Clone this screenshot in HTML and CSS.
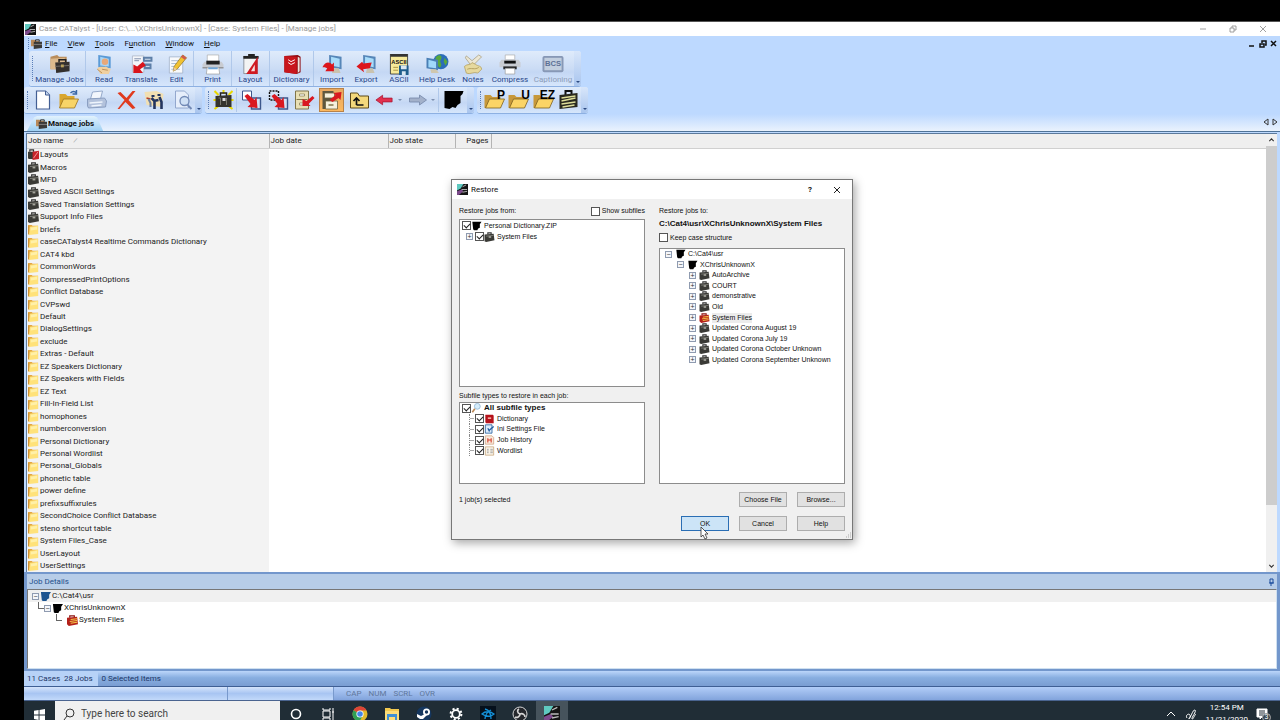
FILE: index.html
```html
<!DOCTYPE html>
<html lang="en">
<head>
    <meta charset="UTF-8">
    <meta name="viewport" content="width=device-width, initial-scale=1.0">
    <title>Case CATalyst</title>
    <link rel="stylesheet" href="styles.css">
</head>
<body>

    <!-- Icon sprite -->
    <svg class="sprite" aria-hidden="true">
        <symbol id="i-app" viewBox="0 0 12 12">
            <rect width="12" height="12" fill="#151515"/>
            <path d="M0 0h7L4 5 0 7z" fill="#5fc9c0"/>
            <path d="M0 8l5-2 2 2-5 4H0z" fill="#7d4a8c"/>
            <path d="M6 3l4-2M5 6h6M6 9l5-1" stroke="#bbb" stroke-width="1"/>
        </symbol>
        <symbol id="i-case" viewBox="0 0 12 12">
            <path d="M4 3V1h4v2" fill="none" stroke="#333" stroke-width="1.3"/>
            <path d="M0 3l11-1 1 8-10 2-2-1z" fill="#3a3a36"/>
            <path d="M2 5l9-1" stroke="#80807a" stroke-width="1"/>
            <rect x="5" y="5" width="3" height="2" fill="#a5a59c"/>
        </symbol>
        <symbol id="i-case-red" viewBox="0 0 12 12">
            <path d="M2 3V1h4v2" fill="none" stroke="#333" stroke-width="1.3"/>
            <path d="M0 3h7v8H1L0 10z" fill="#3a3a36"/>
            <path d="M5 3l7-1v9l-7 1z" fill="#c8242a"/>
            <path d="M6 10l5-7" stroke="#f3a0a0"/>
        </symbol>
        <symbol id="i-case-open" viewBox="0 0 12 12">
            <path d="M3 3V1h5v2" fill="none" stroke="#8c1410" stroke-width="1.3"/>
            <path d="M0 3l11-1 1 8-10 2-2-2z" fill="#b3201a"/>
            <path d="M4 5l7-1M3 7l8-1M4 9l7-1" stroke="#f5c545" stroke-width="1.1"/>
        </symbol>
        <symbol id="i-folder" viewBox="0 0 12 12">
            <path d="M0 1h4l1 1h6v9H0z" fill="#e2a640"/>
            <path d="M2 3l9-1v9L1 12z" fill="#ffe27a"/>
            <path d="M3 4l7-1v3L3 7z" fill="#fff0a8"/>
            <path d="M.6 2v9.500" stroke="#cc8c34"/>
        </symbol>
        <symbol id="i-map" viewBox="0 0 12 12">
            <path d="M1 1h11l-2 3 0 4-2 1-1 2H3L2 10z"/>
        </symbol>
        <symbol id="i-tabcase" viewBox="0 0 12 12">
            <path d="M0 2h4l1 1h4v6H0z" fill="#b98a5a"/>
            <path d="M5 4V2h4v2" fill="none" stroke="#222" stroke-width="1"/>
            <path d="M3 4h9v7l-9 1z" fill="#3b3a38"/>
            <path d="M3 7h9" stroke="#999" stroke-width=".8"/>
        </symbol>
        <symbol id="i-manage" viewBox="0 0 24 22">
            <path d="M2 3l7-2 2 2h8v13H2z" fill="#b98d5c"/>
            <path d="M2 5l15-1v12H2z" fill="#dcb98c"/>
            <path d="M11 9V6h7v3" fill="none" stroke="#222" stroke-width="1.6"/>
            <path d="M7 9l15-1v10l-14 2z" fill="#34302e"/>
            <path d="M7 13l15-1" stroke="#77706a"/>
            <rect x="13" y="11" width="3" height="3" fill="#b9a15c"/>
        </symbol>
        <symbol id="i-read" viewBox="0 0 24 22">
            <path d="M6 1l13 2v12L6 14z" fill="#5a9ad6"/>
            <path d="M8 3l9 2v8l-9-1z" fill="#a9d5f5"/>
            <circle cx="13" cy="8" r="3.4" fill="#e8a878"/>
            <path d="M5 15c3-3 6-1 9-2l5 3-2 5H8z" fill="#f0d0a0"/>
            <path d="M5 16l5 4M10 16l6 1" stroke="#bb8d55"/>
        </symbol>
        <symbol id="i-translate" viewBox="0 0 24 22">
            <path d="M3 2h12v17H3z" fill="#f4f6fa" stroke="#a9b3c4" stroke-width=".8"/>
            <path d="M14 3h10v5H14zM15 10h8v6h-8z" fill="#5d7fa8"/>
            <path d="M16 5.500h6M17 13h4" stroke="#dce6f2"/>
            <path d="M5 5h7M5 7h5" stroke="#7d8da8"/>
            <path d="M4 11l4 2 6-5 3 4-6 4 3 4-10 0z" fill="#d8141c"/>
        </symbol>
        <symbol id="i-edit" viewBox="0 0 24 22">
            <path d="M4 3h14v17H4z" fill="#f8f9fb" stroke="#9fb0c8" stroke-width=".8"/>
            <path d="M6 7h8M6 10h7M6 13h5M6 16h9" stroke="#a9b9d0"/>
            <path d="M18 1l4 3-10 12-4 2 1-5z" fill="#f1c232" stroke="#8a6a1a" stroke-width=".7"/>
            <path d="M8 18l1-4 3 2z" fill="#e9c9a0"/>
            <path d="M18 1l4 3-2 2-4-3z" fill="#cf5a50"/>
        </symbol>
        <symbol id="i-print" viewBox="0 0 24 22">
            <path d="M6 1h12v7H6z" fill="#fff" stroke="#aaa" stroke-width=".7"/>
            <path d="M3 8h18l2 3v4H1v-4z" fill="#c9ccd2"/>
            <path d="M5 7h14v4H5z" fill="#222"/>
            <path d="M1 14h22v1H1z" fill="#777"/>
            <path d="M6 14h12l1 7H5z" fill="#fff" stroke="#999" stroke-width=".7"/>
            <path d="M7 14h10v2H7z" fill="#6fa5d8"/>
        </symbol>
        <symbol id="i-layout" viewBox="0 0 24 22">
            <path d="M4 2h15v19H4z" fill="#8f949c"/>
            <path d="M5 3h13v17H5z" fill="#f3f3f3"/>
            <path d="M4 2h16v3H4zM9 0h7v3H9z" fill="#222"/>
            <path d="M19 3v18H7z" fill="#cf1a22"/>
            <path d="M16 11v7h-4z" fill="#f5dede"/>
        </symbol>
        <symbol id="i-dict" viewBox="0 0 24 22">
            <path d="M4 2l14-1 3 2v16l-4 2-13-2z" fill="#8e0b10"/>
            <path d="M4 2l13 1v18L4 19z" fill="#c8161c"/>
            <path d="M18 3l2 1v14l-2 2z" fill="#eee4dc"/>
            <path d="M8 6l3 2 4-2M8 9l3 2 4-2" fill="none" stroke="#fff" stroke-width="1"/>
        </symbol>
        <symbol id="i-import" viewBox="0 0 24 22">
            <path d="M9 1l13 2v13L9 14z" fill="#5686b8"/>
            <path d="M11 3l9 2v9l-9-2z" fill="#a8dcfa"/>
            <path d="M13 15h6l2 5h-9z" fill="#c9c2ae"/>
            <path d="M2 14c3-6 7-6 10-3l2-2 0 9-9 0 2-3c-2-1-3-1-5-1z" fill="#dc161c"/>
        </symbol>
        <symbol id="i-export" viewBox="0 0 24 22">
            <path d="M9 1l13 2v13L9 14z" fill="#5686b8"/>
            <path d="M11 3l9 2v9l-9-2z" fill="#a8dcfa"/>
            <path d="M13 15h6l2 5h-9z" fill="#c9c2ae"/>
            <path d="M2 13l6-5 1 2 9-1-2 6-7 1 1 3z" fill="#dc161c"/>
        </symbol>
        <symbol id="i-ascii" viewBox="0 0 24 22">
            <path d="M3 0h18v21H3z" fill="#f6ea9a" stroke="#222" stroke-width=".8"/>
            <path d="M3 0h18v3H3z" fill="#333"/>
            <path d="M6 14h5M6 17h5" stroke="#aa9440"/>
            <path d="M12 12h10v10H12z" fill="#1f5e8c"/>
            <path d="M14 12h6v4h-6zM15 18h4v4h-4z" fill="#d9e8f2"/>
        </symbol>
        <symbol id="i-help" viewBox="0 0 24 22">
            <circle cx="16" cy="8" r="8" fill="#2c6db8"/>
            <path d="M12 2c4-2 6 1 4 4s2 4 0 7-3-1-4-4-3-4 0-7zM20 4l3 4-2 4-2-4z" fill="#58a83c"/>
            <path d="M1 4l12 2v11L1 15z" fill="#4a7fb5"/>
            <path d="M3 6l8 2v7l-8-1z" fill="#a0d8fa"/>
            <path d="M5 16h6l3 4H6z" fill="#cfc7ae"/>
        </symbol>
        <symbol id="i-notes" viewBox="0 0 24 22">
            <path d="M5 2l6 5 7-6 3 2-8 8-3 1-6-8z" fill="#ece7d4" stroke="#a89f80" stroke-width=".8"/>
            <path d="M3 13c3-3 7-1 8-4l4 2c2 2 6 1 6 5l-4 4c-4-2-8 2-12 0z" fill="#e6d99e" stroke="#b39f5e" stroke-width=".8"/>
            <path d="M6 16c4-2 8 1 12-2" fill="none" stroke="#b39f5e"/>
        </symbol>
        <symbol id="i-compress" viewBox="0 0 24 22">
            <path d="M7 1h10v5H7z" fill="#fff" stroke="#aaa" stroke-width=".7"/>
            <path d="M3 6h18l2 3v5H1V9z" fill="#c9ccd2"/>
            <path d="M6 7h12v3H6z" fill="#111"/>
            <path d="M5 13h14v3H5z" fill="#222"/>
            <path d="M7 15h10v6H7z" fill="#fff" stroke="#999" stroke-width=".7"/>
        </symbol>
        <symbol id="i-bcs" viewBox="0 0 24 22">
            <rect x="1" y="2" width="22" height="17" rx="2" fill="#8798b6"/>
            <rect x="3" y="4" width="18" height="13" fill="#c2cede"/>
        </symbol>
        <symbol id="i-new" viewBox="0 0 20 20">
            <path d="M4 1h9l4 4v14H4z" fill="#fff" stroke="#445f94" stroke-width="1.2"/>
            <path d="M13 1v4h4" fill="#c6d7ef" stroke="#445f94"/>
        </symbol>
        <symbol id="i-open" viewBox="0 0 20 20">
            <path d="M1 4h6l2 2h7v12H1z" fill="#d9a62e"/>
            <path d="M1 18l4-9h15l-4 9z" fill="#f8d468" stroke="#9c7420" stroke-width=".8"/>
            <path d="M12 3c2-2 4-2 6 0M18 0v4h-4" fill="none" stroke="#3867a8" stroke-width="1.4"/>
        </symbol>
        <symbol id="i-print-off" viewBox="0 0 20 20">
            <path d="M6 2l10-1-2 8H4z" fill="#f2f6fc" stroke="#8298be" stroke-width=".8"/>
            <path d="M1 9l17-1 2 3-1 6-17 1-1-2z" fill="#b3c2dc" stroke="#7e93b8" stroke-width=".8"/>
            <path d="M3 13l13-1M5 16l10-1" stroke="#eef4fc" stroke-width="1.5"/>
        </symbol>
        <symbol id="i-delete" viewBox="0 0 20 20">
            <path d="M1 3l3-1 6 6 6-7 3 0-7 9 7 8-3 1-7-7-6 7H1l7-9z" fill="#e03a1e"/>
        </symbol>
        <symbol id="i-word" viewBox="0 0 20 20">
            <path d="M0 2l12-1 7 3-2 13-15-2z" fill="#f1dfb2"/>
            <path d="M7 8l3 3v8M15 7l2 5v7M9 11l5-1" fill="none" stroke="#23355f" stroke-width="2.6"/>
            <path d="M7 6h3M13 5h3" stroke="#23355f" stroke-width="2"/>
            <path d="M2 8l4 1" stroke="#b6402a" stroke-width="1.5"/>
            <path d="M4 9l2 4v4" fill="none" stroke="#6d7f9f" stroke-width="2"/>
        </symbol>
        <symbol id="i-find" viewBox="0 0 20 20">
            <path d="M3 1h9l4 4v13H3z" fill="#e6eefb" stroke="#8ba0c8" stroke-width=".9"/>
            <circle cx="12" cy="11" r="4.5" fill="#cfe0f5" stroke="#7289b5" stroke-width="1.3"/>
            <path d="M15 15l4 4" stroke="#7289b5" stroke-width="2"/>
        </symbol>
        <symbol id="i-newcase" viewBox="0 0 20 20">
            <path d="M1 1l4 4M10 0v4M19 1l-4 4M0 10h3M20 10h-3M1 19l4-3M19 19l-4-3" stroke="#e8d800" stroke-width="2"/>
            <path d="M7 6V3h6v3" fill="none" stroke="#222" stroke-width="1.5"/>
            <path d="M2 6l16-1v12H2z" fill="#34342e"/>
            <path d="M5 8h2v7M13 8v7" fill="none" stroke="#77776c"/>
            <path d="M9 8h3v3H9z" fill="#ddd"/>
        </symbol>
        <symbol id="i-copy" viewBox="0 0 20 20">
            <path d="M1 1h9v9H1z" fill="#fff" stroke="#3d578c"/>
            <path d="M10 8h9v11h-9z" fill="#d4e0f4" stroke="#3d578c" stroke-width="1.4"/>
            <path d="M3 6l3-2 7 6 2-3 1 11-10-1 3-3z" fill="#d91820"/>
        </symbol>
        <symbol id="i-move" viewBox="0 0 20 20">
            <path d="M1 1h9v9H1z" fill="none" stroke="#111" stroke-width="1.4" stroke-dasharray="2 1"/>
            <path d="M10 8h9v11h-9z" fill="#d4e0f4" stroke="#3d578c" stroke-width="1.4"/>
            <path d="M3 6l3-2 7 6 2-3 1 11-10-1 3-3z" fill="#d91820"/>
        </symbol>
        <symbol id="i-backup" viewBox="0 0 20 20">
            <path d="M1 1h13v18H1z" fill="#e8dfb4" stroke="#80754a"/>
            <path d="M2 9h11v1H2z" fill="#80754a"/>
            <path d="M5 4h5v2H5zM5 13h5v2H5z" fill="#fff" stroke="#80754a" stroke-width=".7"/>
            <path d="M8 9l4 2 6-5 2 2-6 6 2 2-8 0z" fill="#d91820"/>
        </symbol>
        <symbol id="i-restore" viewBox="0 0 20 20">
            <path d="M1 1h11v18H1z" fill="#5d563f"/>
            <path d="M3 3h10v5H3zM4 11h12v8H4z" fill="#f5f0dd" stroke="#6c6240" stroke-width=".8"/>
            <path d="M7 14h5v2H7z" fill="#9d936f"/>
            <path d="M8 10l6-5-2-2 8-1-1 8-2-2-6 4z" fill="#d91820"/>
        </symbol>
        <symbol id="i-up" viewBox="0 0 20 20">
            <path d="M1 3h7l2 3h9v12H1z" fill="#f3d87c" stroke="#5d4a1a"/>
            <path d="M7 15V9M4 11l3-3 3 3M7 15h7" fill="none" stroke="#111" stroke-width="1.7"/>
        </symbol>
        <symbol id="i-back" viewBox="0 0 20 20">
            <path d="M1 10l7-5v3h10v4H8v3z" fill="#e2304e" stroke="#a81632" stroke-width=".8"/>
        </symbol>
        <symbol id="i-forward" viewBox="0 0 20 20">
            <path d="M19 10l-7-5v3H2v4h10v3z" fill="#a3b1ca" stroke="#7486a8" stroke-width=".8"/>
        </symbol>
        <symbol id="i-ohio" viewBox="0 0 20 20">
            <path d="M1 1h19l-1 3-2 2v7l-3 2-2 3-3-1-3 2-5-1z"/>
        </symbol>
        <symbol id="i-fold" viewBox="0 0 20 20">
            <path d="M0 5h6l2 2h8v11H0z" fill="#c7983a"/>
            <path d="M1 18l4-9h15l-4 9z" fill="#fbd466" stroke="#7c6020" stroke-width=".8"/>
        </symbol>
        <symbol id="i-casez" viewBox="0 0 20 20">
            <path d="M7 5V1h6v4" fill="none" stroke="#111" stroke-width="2"/>
            <path d="M1 5l18-2v14L1 19z" fill="#29291f"/>
            <path d="M3 8l14-2M3 11l14-3M3 14l14-2M4 17l12-2" fill="none" stroke="#dede9a" stroke-width="1.5"/>
        </symbol>
        <symbol id="i-book" viewBox="0 0 12 12">
            <path d="M1 1h9l1 1v9H2l-1-1z" fill="#b5121a"/>
            <path d="M4 4h4v2H4z" fill="#f2a8a0"/>
        </symbol>
        <symbol id="i-all" viewBox="0 0 12 12">
            <circle cx="7" cy="4" r="3.5" fill="#d5ecfa" stroke="#90b6d4"/>
            <path d="M4 7l-3 4" stroke="#b98450" stroke-width="2"/>
        </symbol>
        <symbol id="i-ini" viewBox="0 0 12 12">
            <path d="M1 1h8v10H1z" fill="#dcebfa" stroke="#28609c"/>
            <path d="M5 8l6-5M4 5l2 4" stroke="#1f5aa0" stroke-width="1.5"/>
        </symbol>
        <symbol id="i-history" viewBox="0 0 12 12">
            <path d="M1 1h8l2 2v8H1z" fill="#fbe9dc" stroke="#c99c74" stroke-width=".8"/>
            <path d="M4 4v5M8 4v5M4 6h4" stroke="#d2402c" stroke-width="1.3"/>
        </symbol>
        <symbol id="i-wordlist" viewBox="0 0 12 12">
            <path d="M1 1h10v10H1z" fill="#faf4e8" stroke="#c09868" stroke-width=".8"/>
            <path d="M3 4h2M7 4h3M3 6h2M7 6h3M3 8h2M7 8h3" stroke="#9b9b9b"/>
        </symbol>
        <symbol id="i-chrome" viewBox="0 0 16 16">
            <circle cx="8" cy="8" r="7.5" fill="#e2b92c"/>
            <path d="M8 8L1.500 4.200A7.500 7.500 0 0 1 14.600 4.500H8z" fill="#dc4437"/>
            <path d="M8 8L1.500 4.200A7.500 7.500 0 0 0 7.500 15.500L11 9z" fill="#2f9e55"/>
            <circle cx="8" cy="8" r="3.6" fill="#fff"/>
            <circle cx="8" cy="8" r="2.8" fill="#4486e8"/>
        </symbol>
        <symbol id="i-explorer" viewBox="0 0 16 16">
            <path d="M1 2h5l1 1h8v11H1z" fill="#f3c94f"/>
            <path d="M1 5h14v9H1z" fill="#fcdc78"/>
            <path d="M3 8h10v6h-2v-3H5v3H3z" fill="#3f8fd4"/>
        </symbol>
        <symbol id="i-steam" viewBox="0 0 16 16">
            <circle cx="8" cy="8" r="7.5" fill="#15365e"/>
            <circle cx="10.5" cy="6" r="2.6" fill="none" stroke="#fff" stroke-width="1.8"/>
            <path d="M1 8l4 2 4-2 2 1-4 4-3 0-3-2z" fill="#fff"/>
        </symbol>
        <symbol id="i-gear" viewBox="0 0 16 16">
            <circle cx="8" cy="8" r="5.4" fill="none" stroke="#fff" stroke-width="2" stroke-dasharray="2.1 2.140"/>
            <circle cx="8" cy="8" r="3.8" fill="none" stroke="#fff" stroke-width="1.8"/>
        </symbol>
        <symbol id="i-bnet" viewBox="0 0 16 16">
            <rect width="16" height="16" fill="#05101c"/>
            <path d="M2 8c3-3 8-3 12 0-3 3-8 3-12 0zM5 3c4 1 6 5 6 10M11 4c-4 2-6 5-6 9" fill="none" stroke="#1490d8" stroke-width="1.3"/>
        </symbol>
        <symbol id="i-obs" viewBox="0 0 16 16">
            <circle cx="8" cy="8" r="7" fill="#25272c" stroke="#d6d6d6"/>
            <path d="M8 8c-3-1-3-4-1-5M8 8c3-1 5 1 5 3M8 8c0 3-3 4-5 3" fill="none" stroke="#d6d6d6" stroke-width="1.7"/>
        </symbol>
    </svg>

    <div class="desktop">
        <main class="app">
            <header class="titlebar">
                <svg class="icon"><use href="#i-app"/></svg>
                <span class="title">Case CATalyst - [User: C:\...\XChrisUnknownX] - [Case: System Files] - [Manage jobs]</span>
                <div class="window-buttons">
                    <button aria-label="Minimize"><svg viewBox="0 0 8 8"><path d="M1 4h6"/></svg></button>
                    <button aria-label="Restore down"><svg viewBox="0 0 8 8"><path d="M1 3h4v4H1zM3 3V1h4v4H5"/></svg></button>
                    <button aria-label="Close"><svg viewBox="0 0 8 8"><path d="M1 1l6 6M7 1L1 7"/></svg></button>
                </div>
            </header>

            <nav class="menubar">
                <span class="grip"></span>
                <svg class="icon"><use href="#i-tabcase"/></svg>
                <button><u>F</u>ile</button>
                <button><u>V</u>iew</button>
                <button><u>T</u>ools</button>
                <button>F<u>u</u>nction</button>
                <button><u>W</u>indow</button>
                <button><u>H</u>elp</button>
                <div class="child-buttons">
                    <button aria-label="Minimize job window"><svg viewBox="0 0 8 8"><path d="M1 6h5"/></svg></button>
                    <button aria-label="Restore job window"><svg viewBox="0 0 8 8"><path d="M1 4h4v3H1zM3 3V1h4v4H6"/></svg></button>
                    <button aria-label="Close job window"><svg viewBox="0 0 8 8"><path d="M1 1l5 5M6 1L1 6"/></svg></button>
                </div>
            </nav>

            <div class="toolbars">
                <div class="toolbar toolbar-large">
                    <span class="grip"></span>
                    <div class="big-buttons">
                        <button class="divided"><svg><use href="#i-manage"/></svg>Manage Jobs</button>
                        <button><svg><use href="#i-read"/></svg>Read</button>
                        <button><svg><use href="#i-translate"/></svg>Translate</button>
                        <button class="divided"><svg><use href="#i-edit"/></svg>Edit</button>
                        <button class="divided"><svg><use href="#i-print"/></svg>Print</button>
                        <button class="divided"><svg><use href="#i-layout"/></svg>Layout</button>
                        <button class="divided"><svg><use href="#i-dict"/></svg>Dictionary</button>
                        <button><svg><use href="#i-import"/></svg>Import</button>
                        <button><svg><use href="#i-export"/></svg>Export</button>
                        <button><svg viewBox="0 0 24 22"><use href="#i-ascii"/><text x="12" y="10" text-anchor="middle" class="icon-text">ASCII</text></svg>ASCII</button>
                        <button><svg><use href="#i-help"/></svg>Help Desk</button>
                        <button><svg><use href="#i-notes"/></svg>Notes</button>
                        <button><svg><use href="#i-compress"/></svg>Compress</button>
                        <button disabled><svg viewBox="0 0 24 22"><use href="#i-bcs"/><text x="12" y="13" text-anchor="middle" class="icon-text bcs">BCS</text></svg>Captioning</button>
                    </div>
                    <button class="more" aria-label="Toolbar options"></button>
                </div>
                <div class="toolbar-row">
                    <div class="toolbar">
                        <span class="grip"></span>
                        <div class="small-buttons file-buttons">
                            <button aria-label="New"><svg><use href="#i-new"/></svg></button>
                            <button aria-label="Open"><svg><use href="#i-open"/></svg></button>
                            <button aria-label="Print"><svg><use href="#i-print-off"/></svg></button>
                            <button aria-label="Delete"><svg><use href="#i-delete"/></svg></button>
                            <button aria-label="Find job"><svg><use href="#i-word"/></svg></button>
                            <button aria-label="Preview"><svg><use href="#i-find"/></svg></button>
                        </div>
                        <button class="more" aria-label="Toolbar options"></button>
                    </div>
                    <div class="toolbar">
                        <span class="grip"></span>
                        <div class="small-buttons job-buttons">
                            <button class="divided" aria-label="New case"><svg><use href="#i-newcase"/></svg></button>
                            <button aria-label="Copy"><svg><use href="#i-copy"/></svg></button>
                            <button aria-label="Move"><svg><use href="#i-move"/></svg></button>
                            <button aria-label="Back up"><svg><use href="#i-backup"/></svg></button>
                            <button class="pressed" aria-label="Restore"><svg><use href="#i-restore"/></svg></button>
                            <button aria-label="Up one level"><svg><use href="#i-up"/></svg></button>
                            <button aria-label="Back"><svg><use href="#i-back"/></svg></button>
                            <button class="drop" aria-label="Back history"></button>
                            <button aria-label="Forward"><svg><use href="#i-forward"/></svg></button>
                            <button class="drop divided" aria-label="Forward history"></button>
                            <button aria-label="User"><svg><use href="#i-ohio"/></svg></button>
                        </div>
                        <button class="more" aria-label="Toolbar options"></button>
                    </div>
                    <div class="toolbar">
                        <span class="grip"></span>
                        <div class="small-buttons folder-buttons">
                            <button><svg><use href="#i-fold"/></svg><b>P</b></button>
                            <button><svg><use href="#i-fold"/></svg><b>U</b></button>
                            <button><svg><use href="#i-fold"/></svg><b>EZ</b></button>
                            <button aria-label="Case"><svg><use href="#i-casez"/></svg></button>
                        </div>
                        <button class="more" aria-label="Toolbar options"></button>
                    </div>
                </div>
            </div>

            <div class="tabs">
                <button class="tab"><svg class="icon"><use href="#i-tabcase"/></svg>Manage jobs</button>
                <div class="tab-arrows">
                    <button aria-label="Previous tab"><svg viewBox="0 0 6 8"><path d="M5 1v6L1 4z"/></svg></button>
                    <button aria-label="Next tab"><svg viewBox="0 0 6 8"><path d="M1 1v6l4-3z"/></svg></button>
                </div>
            </div>

            <section class="jobs">
                <table class="job-table">
                    <colgroup><col class="c-name"><col class="c-date"><col class="c-state"><col class="c-pages"><col></colgroup>
                    <thead>
                        <tr><th>Job name <i class="sort">⁄</i></th><th>Job date</th><th>Job state</th><th class="right">Pages</th><th></th></tr>
                    </thead>
                    <tbody>
                        <tr><td><svg class="icon"><use href="#i-case-red"/></svg>Layouts</td></tr>
                        <tr><td><svg class="icon"><use href="#i-case"/></svg>Macros</td></tr>
                        <tr><td><svg class="icon"><use href="#i-case"/></svg>MFD</td></tr>
                        <tr><td><svg class="icon"><use href="#i-case"/></svg>Saved ASCII Settings</td></tr>
                        <tr><td><svg class="icon"><use href="#i-case"/></svg>Saved Translation Settings</td></tr>
                        <tr><td><svg class="icon"><use href="#i-case"/></svg>Support Info Files</td></tr>
                        <tr><td><svg class="icon"><use href="#i-folder"/></svg>briefs</td></tr>
                        <tr><td><svg class="icon"><use href="#i-folder"/></svg>caseCATalyst4 Realtime Commands Dictionary</td></tr>
                        <tr><td><svg class="icon"><use href="#i-folder"/></svg>CAT4 kbd</td></tr>
                        <tr><td><svg class="icon"><use href="#i-folder"/></svg>CommonWords</td></tr>
                        <tr><td><svg class="icon"><use href="#i-folder"/></svg>CompressedPrintOptions</td></tr>
                        <tr><td><svg class="icon"><use href="#i-folder"/></svg>Conflict Database</td></tr>
                        <tr><td><svg class="icon"><use href="#i-folder"/></svg>CVPswd</td></tr>
                        <tr><td><svg class="icon"><use href="#i-folder"/></svg>Default</td></tr>
                        <tr><td><svg class="icon"><use href="#i-folder"/></svg>DialogSettings</td></tr>
                        <tr><td><svg class="icon"><use href="#i-folder"/></svg>exclude</td></tr>
                        <tr><td><svg class="icon"><use href="#i-folder"/></svg>Extras - Default</td></tr>
                        <tr><td><svg class="icon"><use href="#i-folder"/></svg>EZ Speakers Dictionary</td></tr>
                        <tr><td><svg class="icon"><use href="#i-folder"/></svg>EZ Speakers with Fields</td></tr>
                        <tr><td><svg class="icon"><use href="#i-folder"/></svg>EZ Text</td></tr>
                        <tr><td><svg class="icon"><use href="#i-folder"/></svg>Fill-In-Field List</td></tr>
                        <tr><td><svg class="icon"><use href="#i-folder"/></svg>homophones</td></tr>
                        <tr><td><svg class="icon"><use href="#i-folder"/></svg>numberconversion</td></tr>
                        <tr><td><svg class="icon"><use href="#i-folder"/></svg>Personal Dictionary</td></tr>
                        <tr><td><svg class="icon"><use href="#i-folder"/></svg>Personal Wordlist</td></tr>
                        <tr><td><svg class="icon"><use href="#i-folder"/></svg>Personal_Globals</td></tr>
                        <tr><td><svg class="icon"><use href="#i-folder"/></svg>phonetic table</td></tr>
                        <tr><td><svg class="icon"><use href="#i-folder"/></svg>power define</td></tr>
                        <tr><td><svg class="icon"><use href="#i-folder"/></svg>prefixsuffixrules</td></tr>
                        <tr><td><svg class="icon"><use href="#i-folder"/></svg>SecondChoice Conflict Database</td></tr>
                        <tr><td><svg class="icon"><use href="#i-folder"/></svg>steno shortcut table</td></tr>
                        <tr><td><svg class="icon"><use href="#i-folder"/></svg>System Files_Case</td></tr>
                        <tr><td><svg class="icon"><use href="#i-folder"/></svg>UserLayout</td></tr>
                        <tr><td><svg class="icon"><use href="#i-folder"/></svg>UserSettings</td></tr>
                    </tbody>
                </table>
                <div class="scrollbar">
                    <svg viewBox="0 0 10 10"><path d="M3 6l2-2 2 2"/></svg>
                    <div class="thumb"></div>
                    <svg viewBox="0 0 10 10"><path d="M3 4l2 2 2-2"/></svg>
                </div>
            </section>

            <section class="details">
                <div class="details-head">
                    <span>Job Details</span>
                    <button aria-label="Pin"><svg viewBox="0 0 8 8"><path d="M3 1h3v4H3zM2 5h5M4 5v3"/></svg></button>
                </div>
                <ul class="details-tree">
                    <li class="current"><button class="twig">−</button><svg class="icon blue"><use href="#i-map"/></svg>C:\Cat4\usr</li>
                    <li class="level-1"><span class="elbow"></span><button class="twig">−</button><svg class="icon"><use href="#i-map"/></svg>XChrisUnknownX</li>
                    <li class="level-2"><span class="elbow"></span><svg class="icon"><use href="#i-case-open"/></svg>System Files</li>
                </ul>
            </section>

            <div class="summary">
                <span class="counts">11 Cases&nbsp; 28 Jobs</span>
                <span>0 Selected Items</span>
            </div>
            <footer class="status">
                <span class="cell wide"></span>
                <span class="cell"></span>
                <div class="keys"><span>CAP</span><span>NUM</span><span>SCRL</span><span>OVR</span></div>
            </footer>
        </main>

        <div class="taskbar">
            <button class="start" aria-label="Start"><svg viewBox="0 0 12 12"><path d="M0 2l5-1v5H0zM6 1l6-1v6H6zM0 7h5v5l-5-1zM6 7h6v5l-6 0z"/></svg></button>
            <label class="search">
                <svg viewBox="0 0 12 12"><circle cx="7" cy="5" r="4"/><path d="M4 8l-3 4"/></svg>
                <input type="text" aria-label="Search" placeholder="Type here to search">
            </label>
            <div class="task-buttons">
                <button aria-label="Cortana"><svg viewBox="0 0 16 16"><circle class="line" cx="8" cy="8" r="4.5"/></svg></button>
                <button aria-label="Task view"><svg viewBox="0 0 16 16"><path class="thin" d="M3 5h7v6H3zM3 2v2h7V2M3 14v-2h7v2M13 2v12M12 6h2"/></svg></button>
                <button aria-label="Chrome"><svg><use href="#i-chrome"/></svg></button>
                <button aria-label="File Explorer"><svg><use href="#i-explorer"/></svg></button>
                <button aria-label="Steam"><svg><use href="#i-steam"/></svg></button>
                <button aria-label="Settings"><svg><use href="#i-gear"/></svg></button>
                <button aria-label="Battle.net"><svg><use href="#i-bnet"/></svg></button>
                <button aria-label="OBS"><svg><use href="#i-obs"/></svg></button>
                <button class="active" aria-label="Case CATalyst"><svg><use href="#i-app"/></svg></button>
            </div>
            <div class="tray">
                <svg viewBox="0 0 12 12"><path d="M2 8l4-4 4 4"/></svg>
                <svg viewBox="0 0 12 12"><path d="M2 10c-2-3 2-5 3-3s-2 4-1 4 4-10 6-9-4 8-3 9 3-5 4-5"/></svg>
                <div class="clock"><span>12:54 PM</span><span>11/21/2020</span></div>
                <div class="notice">
                    <svg viewBox="0 0 12 12"><path d="M1 1h10v8H6l-2 2V9H1z"/><path class="rule" d="M3 3h6M3 5h6M3 7h4"/></svg>
                    <span class="badge">3</span>
                </div>
            </div>
        </div>

        <div class="dialog" role="dialog" aria-label="Restore">
            <div class="dialog-title">
                <svg class="icon"><use href="#i-app"/></svg>
                <span>Restore</span>
                <button aria-label="Help on item">?</button>
                <button aria-label="Close"><svg viewBox="0 0 8 8"><path d="M1 1l6 6M7 1L1 7"/></svg></button>
            </div>
            <div class="dialog-body">
                <div class="column">
                    <div class="row">
                        <span>Restore jobs from:</span>
                        <label><input type="checkbox">Show subfiles</label>
                    </div>
                    <div class="box from-box">
                        <ul class="tree">
                            <li><label><input type="checkbox" checked><svg class="icon"><use href="#i-map"/></svg>Personal Dictionary.ZIP</label></li>
                            <li class="sub"><button class="twig">+</button><label><input type="checkbox" checked><svg class="icon"><use href="#i-case"/></svg>System Files</label></li>
                        </ul>
                    </div>
                    <div class="caption">Subfile types to restore in each job:</div>
                    <div class="box types-box">
                        <ul class="tree">
                            <li class="strong"><label><input type="checkbox" checked><svg class="icon"><use href="#i-all"/></svg>All subfile types</label></li>
                            <li class="sub"><span class="branch"></span><label><input type="checkbox" checked><svg class="icon"><use href="#i-book"/></svg>Dictionary</label></li>
                            <li class="sub"><span class="branch"></span><label><input type="checkbox" checked><svg class="icon"><use href="#i-ini"/></svg>Ini Settings File</label></li>
                            <li class="sub"><span class="branch"></span><label><input type="checkbox" checked><svg class="icon"><use href="#i-history"/></svg>Job History</label></li>
                            <li class="sub"><span class="branch"></span><label><input type="checkbox" checked><svg class="icon"><use href="#i-wordlist"/></svg>Wordlist</label></li>
                        </ul>
                    </div>
                </div>
                <div class="column">
                    <div class="row"><span>Restore jobs to:</span></div>
                    <div class="path">C:\Cat4\usr\XChrisUnknownX\System Files</div>
                    <label class="keep"><input type="checkbox">Keep case structure</label>
                    <div class="box">
                        <ul class="tree target">
                            <li><button class="twig">−</button><svg class="icon"><use href="#i-map"/></svg>C:\Cat4\usr</li>
                            <li class="depth-1"><button class="twig">−</button><svg class="icon"><use href="#i-map"/></svg>XChrisUnknownX</li>
                            <li class="depth-2"><button class="twig">+</button><svg class="icon"><use href="#i-case"/></svg>AutoArchive</li>
                            <li class="depth-2"><button class="twig">+</button><svg class="icon"><use href="#i-case"/></svg>COURT</li>
                            <li class="depth-2"><button class="twig">+</button><svg class="icon"><use href="#i-case"/></svg>demonstrative</li>
                            <li class="depth-2"><button class="twig">+</button><svg class="icon"><use href="#i-case"/></svg>Old</li>
                            <li class="depth-2"><button class="twig">+</button><svg class="icon"><use href="#i-case-open"/></svg><span class="selected">System Files</span></li>
                            <li class="depth-2"><button class="twig">+</button><svg class="icon"><use href="#i-case"/></svg>Updated Corona August 19</li>
                            <li class="depth-2"><button class="twig">+</button><svg class="icon"><use href="#i-case"/></svg>Updated Corona July 19</li>
                            <li class="depth-2"><button class="twig">+</button><svg class="icon"><use href="#i-case"/></svg>Updated Corona October Unknown</li>
                            <li class="depth-2"><button class="twig">+</button><svg class="icon"><use href="#i-case"/></svg>Updated Corona September Unknown</li>
                        </ul>
                    </div>
                </div>
            </div>
            <div class="dialog-foot">
                <span>1 job(s) selected</span>
                <button class="push choose">Choose File</button>
                <button class="push">Browse...</button>
                <button class="push ok">OK</button>
                <button class="push">Cancel</button>
                <button class="push">Help</button>
            </div>
            <svg class="resize" viewBox="0 0 6 6"><path d="M5 1h1M3 3h1M5 3h1M1 5h1M3 5h1M5 5h1"/></svg>
            <svg class="cursor" viewBox="0 0 10 14"><path d="M1 1v10l2-2 2 4 2-1-2-4h3z"/></svg>
        </div>
    </div>

</body>
</html>
```
FILE: styles.css
```css
* {
    margin: 0;
    padding: 0;
    box-sizing: border-box;
}

body {
    background: #000;
    color: #222;
    font-family: Roboto, "Noto Sans", sans-serif;
    font-size: 8px;
    line-height: 12px;
}

button {
    background: none;
    border: none;
    color: inherit;
    font: inherit;
}

ul {
    list-style: none;
}

.sprite {
    position: absolute;
    width: 0;
    height: 0;
}

.icon {
    width: 11px;
    height: 11px;
    flex: none;
}

.icon-text {
    font: bold 6px "Liberation Sans", sans-serif;
    fill: #111;
}

.icon-text.bcs {
    font-size: 8px;
    fill: #5c7096;
}

.desktop {
    position: relative;
    display: flex;
    flex-direction: column;
    height: 100vh;
    padding: 21px 0 0 24px;
    overflow: hidden;
}

.app {
    flex: 1;
    display: flex;
    flex-direction: column;
    min-height: 0;
    background: #bdd9ff;
}

/* Title and menu */
.titlebar {
    display: flex;
    align-items: center;
    height: 15px;
    padding-left: 1px;
    background: #fff;
    color: #999;
    border-top: 1px solid #555;
}

.title {
    flex: 1;
    padding-left: 3px;
}

.window-buttons {
    display: flex;
    gap: 22px;
    padding-right: 13px;
}

.window-buttons button,
.child-buttons button {
    width: 8px;
    height: 8px;
    display: flex;
}

.window-buttons svg,
.child-buttons svg {
    width: 8px;
    height: 8px;
    fill: none;
    stroke: #888;
    stroke-width: .8;
}

.menubar {
    display: flex;
    align-items: center;
    gap: 10px;
    height: 15px;
    padding-left: 4px;
    color: #111;
}

.menubar .icon {
    margin: 0 -7px 0 -9px;
}

.child-buttons {
    display: flex;
    gap: 3px;
    margin-left: auto;
    padding-right: 2px;
}

.child-buttons svg {
    stroke: #111;
    stroke-width: 1.5;
}

.grip {
    flex: none;
    width: 2px;
    height: 70%;
    border-left: 1px dotted #5a7eb8;
}

/* Toolbars */
.toolbars {
    display: flex;
    flex-direction: column;
    align-items: flex-start;
}

.toolbar {
    display: flex;
    align-items: center;
    padding-left: 3px;
    border-radius: 3px;
    background: linear-gradient(#dfebfb, #cbdcf5 50%, #c4d7f4 60%, #d6e6fb);
    border-bottom: 1px solid #8db0e2;
}

.toolbar-large {
    height: 36px;
    margin-left: 5px;
}

.toolbar-row {
    display: flex;
    gap: 3px;
    height: 27px;
}

.big-buttons {
    display: grid;
    grid-template-columns: 52px 36px 38px 34px 38px 38px 44px 36px 32px 34px 42px 30px 44px 42px;
    height: 100%;
}

.big-buttons button {
    display: flex;
    flex-direction: column;
    align-items: center;
    padding-top: 3px;
    color: #28468a;
    line-height: 10px;
    white-space: nowrap;
}

.big-buttons svg {
    width: 24px;
    height: 21px;
}

.big-buttons button:disabled {
    color: #8c9cb8;
}

.divided {
    border-right: 1px solid #b0c8ea;
}

.more {
    align-self: stretch;
    width: 7px;
    display: flex;
    align-items: flex-end;
    justify-content: center;
    padding-bottom: 3px;
    background: linear-gradient(#d8e6fa, #a9c5ee);
    border-radius: 0 3px 3px 0;
}

.more::after,
.drop::after {
    content: "";
    border: 2px solid transparent;
    border-top-color: #2c4a80;
    border-bottom: 0;
}

.drop::after {
    border-top-color: #7c8fb0;
}

.small-buttons {
    display: grid;
    height: 100%;
    align-items: center;
}

.small-buttons button {
    display: flex;
    align-items: center;
    justify-content: center;
    height: 24px;
}

.small-buttons svg {
    width: 21px;
    height: 20px;
}

.file-buttons {
    grid-template-columns: 27px 25px 31px 28px 29px 26px;
}

.job-buttons {
    grid-template-columns: 27px 29px 24px 29px 25px 31px 19px 12px 22px 11px 28px;
}

.folder-buttons {
    grid-template-columns: 24px 25px 25px 25px;
}

.pressed {
    background: linear-gradient(#e8a860, #fbb860);
    border: 1px solid #b98248;
}

.folder-buttons button {
    position: relative;
}

.folder-buttons b {
    position: absolute;
    top: 1px;
    right: 1px;
    color: #000;
    font: bold 12px/12px "Liberation Sans", sans-serif;
}

/* Tab strip */
.tabs {
    display: flex;
    align-items: flex-end;
    justify-content: space-between;
    height: 18px;
    background: linear-gradient(#bdd9ff, #eaf2fd);
    border-bottom: 1px solid #4f7398;
}

.tab {
    display: flex;
    align-items: center;
    gap: 1px;
    height: 15px;
    margin-left: 3px;
    padding: 0 9px;
    color: #111;
    font-weight: bold;
    background: linear-gradient(#e2f2fd, #9fd0f3);
    clip-path: polygon(0 100%, 7px 10%, 10px 0, calc(100% - 9px) 0, calc(100% - 6px) 10%, 100% 100%);
}

.tab-arrows {
    display: flex;
    gap: 3px;
    padding: 0 2px 5px 0;
}

.tab-arrows button {
    display: flex;
}

.tab-arrows svg {
    width: 6px;
    height: 8px;
    fill: none;
    stroke: #333;
}

/* Job list */
.jobs {
    flex: 1;
    display: flex;
    min-height: 0;
    margin: 1px 3px 0 2px;
    background: #fff;
    border-left: 1px solid #5c7a9c;
    border-top: 1px solid #5c7a9c;
}

.job-table {
    flex: 1;
    height: 100%;
    table-layout: fixed;
    border-collapse: collapse;
}

.c-name { width: 242px; }
.c-date { width: 119px; }
.c-state { width: 67px; }
.c-pages { width: 36px; }

.job-table th {
    height: 14px;
    padding: 0 2px 0 1px;
    background: #efefef;
    border-right: 1px solid #b4b4b4;
    border-bottom: 1px solid #d0d0d0;
    font-weight: normal;
    text-align: left;
}

.job-table th:last-child {
    border-right: none;
}

.job-table th.right {
    text-align: right;
}

.sort {
    padding-left: 8px;
    color: #999;
}

.job-table td {
    padding-left: 1px;
    background: #f3f3f3;
    line-height: 11px;
    white-space: nowrap;
}

.job-table .icon {
    margin-right: 1px;
    vertical-align: middle;
}

.scrollbar {
    display: flex;
    flex-direction: column;
    width: 11px;
    background: #f0f0f0;
}

.scrollbar svg {
    width: 11px;
    height: 12px;
    fill: none;
    stroke: #333;
}

.scrollbar svg:last-child {
    margin-top: auto;
}

.thumb {
    height: 82%;
    background: #cdcdcd;
}

/* Job details */
.details {
    display: flex;
    flex-direction: column;
    border: solid #7397cc;
    border-width: 2px 3px;
}

.details-head {
    display: flex;
    justify-content: space-between;
    align-items: center;
    height: 15px;
    padding: 0 2px;
    background: #b7cde8;
    color: #24508c;
}

.details-head button {
    display: flex;
}

.details-head svg {
    width: 8px;
    height: 8px;
    fill: none;
    stroke: #1c4c9c;
}

.details-tree {
    height: 80px;
    background: #fff;
    border: 1px solid #777;
    border-right-color: #cfe0f0;
    border-bottom-color: #cfe0f0;
}

.details-tree li {
    display: flex;
    align-items: center;
    height: 12px;
    padding-left: 4px;
    gap: 1px;
}

.details-tree .current {
    background: #f0f0f0;
}

.details-tree .level-1 {
    padding-left: 10px;
}

.details-tree .level-2 {
    padding-left: 28px;
}

.level-1 .elbow {
    margin-right: -1px;
}

.level-2 .elbow {
    margin-right: 4px;
}

.elbow {
    width: 6px;
    height: 7px;
    margin-bottom: 6px;
    border-left: 1px solid #666;
    border-bottom: 1px solid #666;
}

.blue {
    fill: #1c5490;
}

.twig {
    flex: none;
    width: 7px;
    height: 7px;
    background: #f4f6fa;
    border: 1px solid #8f9bb0;
    color: #333;
    font: 7px/5px "Liberation Sans", sans-serif;
}

/* Status bars */
.summary {
    display: flex;
    height: 16px;
    line-height: 15px;
    color: #1b3566;
    background: linear-gradient(#bcd6fa, #88aee0 45%, #7a9dd2);
    border-bottom: 1px solid #3f5f94;
}

.summary span {
    padding: 0 4px;
}

.summary .counts {
    padding: 0 5px 0 3px;
    background: #b7d2f7;
}

.status {
    display: flex;
    height: 14px;
    background: linear-gradient(#b2cdf8, #82a4dc);
    border-bottom: 1px solid #4a6490;
    color: #60779c;
}

.cell {
    width: 106px;
    background: linear-gradient(#d5e4fb, #a8c5f2 50%, #c2d9fa);
    border-right: 1px solid #7899cc;
}

.cell.wide {
    width: 204px;
}

.keys {
    display: flex;
    gap: 7px;
    padding-left: 12px;
    line-height: 14px;
}

/* Taskbar, its lower part runs past the screen edge */
.taskbar {
    display: flex;
    height: 26px;
    flex: none;
    margin-bottom: -7px;
    background: #202d36;
    color: #fff;
}

.start {
    width: 31px;
    display: flex;
    align-items: center;
    justify-content: center;
}

.start svg {
    width: 11px;
    height: 11px;
    fill: #fff;
}

.search {
    display: flex;
    align-items: center;
    gap: 6px;
    width: 225px;
    padding-left: 8px;
    background: #f0f0f0;
}

.search svg {
    width: 12px;
    height: 12px;
    fill: none;
    stroke: #333;
}

.search input {
    flex: 1;
    min-width: 0;
    border: none;
    background: none;
    font: inherit;
    font-size: 10px;
}

.search input::placeholder {
    color: #444;
}

.task-buttons {
    display: flex;
}

.task-buttons button {
    display: flex;
    align-items: center;
    justify-content: center;
    width: 32px;
}

.task-buttons svg {
    width: 16px;
    height: 16px;
}

.task-buttons .active {
    background: #46535c;
}

.line,
.thin {
    fill: none;
    stroke: #fff;
    stroke-width: 1.6;
}

.thin {
    stroke-width: 1;
}

.tray {
    display: flex;
    align-items: center;
    gap: 8px;
    margin-left: auto;
    padding-right: 12px;
}

.tray svg {
    width: 12px;
    height: 12px;
    fill: none;
    stroke: #fff;
}

.clock {
    display: flex;
    flex-direction: column;
    align-items: center;
}

.notice {
    position: relative;
    display: flex;
}

.notice svg {
    fill: #fff;
}

.notice .rule {
    stroke: #202d36;
}

.badge {
    position: absolute;
    left: 6px;
    top: 5px;
    width: 9px;
    height: 9px;
    border: 1px solid #aaa;
    border-radius: 50%;
    background: #3a464e;
    font-size: 7px;
    line-height: 7px;
    text-align: center;
}

/* Restore dialog */
.dialog {
    position: absolute;
    left: 451px;
    top: 179px;
    width: 402px;
    display: flex;
    flex-direction: column;
    background: #f0f0f0;
    border: 1px solid #777;
    box-shadow: 2px 3px 9px rgba(0, 0, 0, 0.35);
    color: #111;
    font-family: "Liberation Sans", Arial, sans-serif;
    font-size: 7px;
    line-height: 10px;
    white-space: nowrap;
}

.dialog-title {
    display: flex;
    align-items: center;
    height: 19px;
    padding: 0 11px 0 5px;
    background: #fff;
    font-family: Roboto, "Noto Sans", sans-serif;
    font-size: 8px;
}

.dialog-title span {
    flex: 1;
    padding-left: 3px;
}

.dialog-title button {
    display: flex;
    margin-left: 21px;
    color: #111;
    font-weight: bold;
}

.dialog-title button svg {
    width: 8px;
    height: 8px;
    fill: none;
    stroke: #222;
}

.dialog-body {
    display: grid;
    grid-template-columns: 1fr 1fr;
    gap: 14px;
    padding: 7px 7px 0;
}

.column {
    display: flex;
    flex-direction: column;
}

.row {
    display: flex;
    justify-content: space-between;
    height: 13px;
}

.dialog label {
    display: flex;
    align-items: center;
}

.row label {
    height: 10px;
}

.dialog input[type="checkbox"] {
    appearance: none;
    flex: none;
    width: 9px;
    height: 9px;
    background: #fff;
    border: 1px solid #555;
}

.dialog input[type="checkbox"]:checked::before {
    content: "";
    display: block;
    width: 5px;
    height: 3px;
    margin: 1px;
    border: solid #222;
    border-width: 0 0 1px 1px;
    transform: rotate(-45deg);
}

.row input,
.keep input {
    margin-right: 2px;
}

.path {
    height: 14px;
    font-size: 8px;
    font-weight: bold;
}

.keep {
    height: 9px;
    margin-bottom: 6px;
}

.box {
    flex: 1;
    background: #fff;
    border: 1px solid #8c8c8c;
}

.from-box {
    flex: none;
    height: 168px;
}

.caption {
    padding: 4px 0 1px;
}

.types-box {
    flex: none;
    height: 82px;
}

.tree {
    display: grid;
    grid-auto-rows: 1fr;
    height: 53px;
    padding-left: 2px;
}

.from-box .tree {
    height: 22px;
}

.tree.target {
    height: 116px;
    padding-left: 5px;
}

.tree li {
    display: flex;
    align-items: center;
    min-height: 0;
}

.tree .icon {
    height: 10px;
    margin-right: 2px;
}

.tree .sub {
    padding-left: 4px;
}

.tree .sub label {
    margin-left: 1px;
}

.tree .twig {
    margin-right: 1px;
}

.target .twig {
    margin-right: 3px;
}

.depth-1 {
    padding-left: 12px;
}

.depth-2 {
    padding-left: 24px;
}

.strong {
    font-size: 8px;
    font-weight: bold;
}

.branch {
    align-self: stretch;
    width: 5px;
    margin-left: 3px;
    border-left: 1px dotted #888;
    background: linear-gradient(#aaa, #aaa) center / 100% 1px no-repeat;
}

.selected {
    background: #ececec;
}

.dialog-foot {
    display: grid;
    grid-template-columns: 1fr 48px 48px 48px;
    gap: 9px 10px;
    align-items: center;
    padding: 8px 7px;
}

.choose {
    grid-column: 3;
}

.ok {
    grid-column: 2;
}

.push {
    height: 15px;
    background: #e1e1e1;
    border: 1px solid #adadad;
}

.push.ok {
    background: #cce4f7;
    border-color: #2a6eb4;
}

.resize {
    position: absolute;
    right: 1px;
    bottom: 1px;
    width: 6px;
    height: 6px;
    stroke: #aaa;
}

.cursor {
    position: absolute;
    left: 248px;
    top: 346px;
    width: 10px;
    height: 14px;
    fill: #fff;
    stroke: #333;
    stroke-width: .8;
}
```
